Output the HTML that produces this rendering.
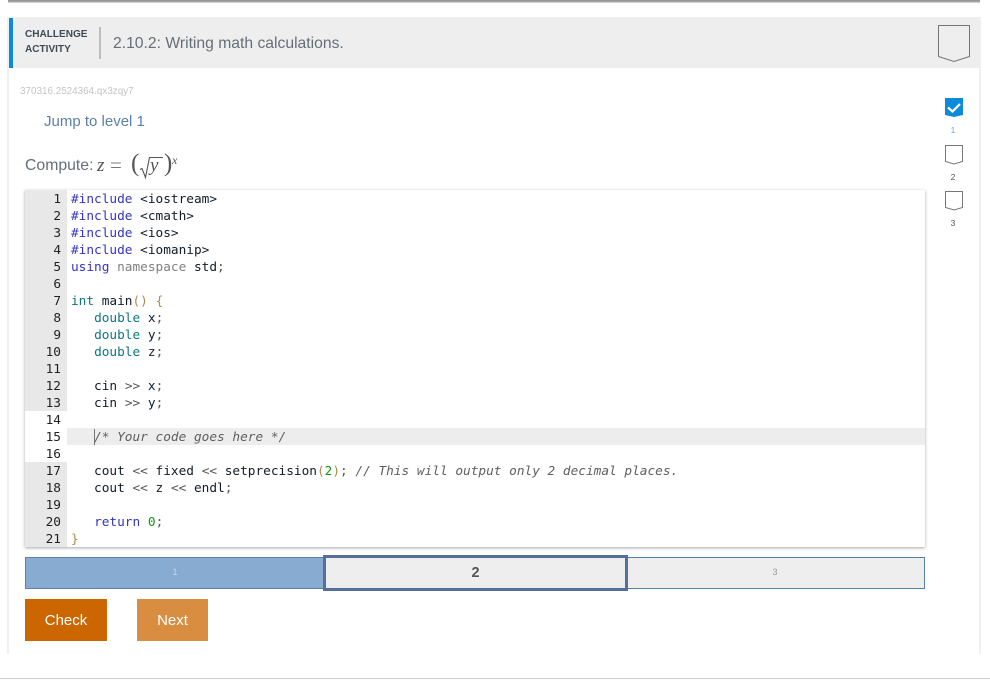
<!DOCTYPE html>
<html>
<head>
<meta charset="utf-8">
<style>
html,body{margin:0;padding:0;background:#fff;}
body{width:990px;height:685px;position:relative;overflow:hidden;font-family:"Liberation Sans",sans-serif;}
.a{position:absolute;}
.code{position:absolute;left:71px;top:191px;font-family:"DejaVu Sans Mono","Liberation Mono",monospace;font-size:12.78px;line-height:17px;white-space:pre;color:#111c28;}
.code div{height:17px;}
.nums{position:absolute;left:25px;width:36px;top:191px;text-align:right;font-family:"DejaVu Sans Mono","Liberation Mono",monospace;font-size:12.78px;line-height:17px;color:#222;}
.nums div{height:17px;}
.k{color:#3434c8}.g{color:#808080}.t{color:#0f7585}.o{color:#555}.b{color:#a98a50}.c{color:#5f5f5f;font-style:italic}.n{color:#119911}
.m{position:absolute;font-family:'Liberation Serif',serif;color:#555;}
</style>
</head>
<body>
<!-- top shadow -->
<div class="a" style="left:8px;top:0;width:972px;height:3px;background:linear-gradient(#8f8f8f,#a8a8a8 60%,#e8e8e8);"></div>
<!-- card side shadows -->
<div class="a" style="left:7px;top:17px;width:2px;height:637px;background:#f0f0f0;"></div>
<div class="a" style="left:979px;top:17px;width:2px;height:637px;background:#f0f0f0;"></div>
<!-- header -->
<div class="a" style="left:9px;top:17px;width:971px;height:51px;background:#eeeeee;"></div>
<div class="a" style="left:9px;top:18px;width:4px;height:50px;background:#0d8bd9;"></div>
<div class="a" style="left:25px;top:27px;font-size:10.05px;line-height:15px;font-weight:bold;color:#3f4a55;">CHALLENGE<br>ACTIVITY</div>
<div class="a" style="left:99px;top:27px;width:2px;height:32px;background:#bdbdbd;"></div>
<div class="a" style="left:113px;top:34px;font-size:15.7px;line-height:19px;color:#666e78;white-space:nowrap;">2.10.2: Writing math calculations.</div>
<!-- big badge -->
<svg class="a" style="left:930px;top:15px;" width="60" height="60"><path d="M8.5 10.5H39.5V41.5L24 46.5L8.5 41.5Z" fill="#eee" stroke="#757575" stroke-width="1"/></svg>

<div class="a" style="left:20px;top:86px;font-size:9.9px;line-height:12px;color:#c4c4c4;white-space:nowrap;">370316.2524364.qx3zqy7</div>
<div class="a" style="left:44px;top:113px;font-size:15px;line-height:18px;color:#5b7fa8;white-space:nowrap;">Jump to level 1</div>

<!-- compute -->
<div class="a" style="left:25px;top:156px;font-size:15.8px;line-height:20px;color:#666e78;white-space:nowrap;">Compute:</div>
<div class="m" style="left:97px;top:156px;font-style:italic;font-size:19px;line-height:20px;">z</div>
<div class="m" style="left:110px;top:155px;font-size:21px;line-height:20px;color:#777;">=</div>
<div class="m" style="left:131px;top:151px;font-size:25px;line-height:26px;">(</div>
<svg class="a" style="left:138px;top:152px;" width="32" height="28"><path d="M2 17.5L4 16.5L7.5 25.5L11.5 5.5H25" fill="none" stroke="#555" stroke-width="1.1"/></svg>
<div class="m" style="left:150px;top:156px;font-style:italic;font-size:19px;line-height:20px;">y</div>
<div class="m" style="left:164px;top:151px;font-size:25px;line-height:26px;">)</div>
<div class="m" style="left:172px;top:153px;font-style:italic;font-size:12px;line-height:14px;">x</div>

<!-- right level badges -->
<svg class="a" style="left:945px;top:98px;" width="18" height="20"><path d="M0 0H18V17L9 19L0 17Z" fill="#0d8bd9"/><path d="M3 9.5L7.5 13.5L15 6" fill="none" stroke="#fff" stroke-width="2.2"/></svg>
<div class="a" style="left:944px;top:125px;width:18px;text-align:center;font-size:8.5px;line-height:11px;color:#7d9ec4;">1</div>
<svg class="a" style="left:945px;top:144px;" width="18" height="22"><path d="M.5 1.5H17.5V17.5L9 20L.5 17.5Z" fill="#fff" stroke="#777" stroke-width="1"/></svg>
<div class="a" style="left:944px;top:172px;width:18px;text-align:center;font-size:8.5px;line-height:11px;color:#555;">2</div>
<svg class="a" style="left:945px;top:190px;" width="18" height="22"><path d="M.5 1.5H17.5V17.5L9 20L.5 17.5Z" fill="#fff" stroke="#777" stroke-width="1"/></svg>
<div class="a" style="left:944px;top:218px;width:18px;text-align:center;font-size:8.5px;line-height:11px;color:#555;">3</div>

<!-- editor -->
<div class="a" style="left:25px;top:190px;width:900px;height:357px;background:#fff;box-shadow:0 1px 3px rgba(0,0,0,.35);"></div>
<div class="a" style="left:25px;top:190px;width:42px;height:221px;background:#e8e8e8;"></div>
<div class="a" style="left:25px;top:462px;width:42px;height:85px;background:#e8e8e8;"></div>
<div class="a" style="left:67px;top:428px;width:858px;height:17px;background:#ededed;"></div>
<div class="a" style="left:94px;top:429px;width:1px;height:16px;background:#777;"></div>
<div class="nums"><div>1</div><div>2</div><div>3</div><div>4</div><div>5</div><div>6</div><div>7</div><div>8</div><div>9</div><div>10</div><div>11</div><div>12</div><div>13</div><div>14</div><div>15</div><div>16</div><div>17</div><div>18</div><div>19</div><div>20</div><div>21</div></div>
<div class="code"><div><span class="k">#include</span> &lt;iostream&gt;</div><div><span class="k">#include</span> &lt;cmath&gt;</div><div><span class="k">#include</span> &lt;ios&gt;</div><div><span class="k">#include</span> &lt;iomanip&gt;</div><div><span class="k">using</span> <span class="g">namespace</span> std<span class="o">;</span></div><div> </div><div><span class="t">int</span> main<span class="b">()</span> <span class="b">{</span></div><div>   <span class="t">double</span> x<span class="o">;</span></div><div>   <span class="t">double</span> y<span class="o">;</span></div><div>   <span class="t">double</span> z<span class="o">;</span></div><div> </div><div>   cin <span class="o">&gt;&gt;</span> x<span class="o">;</span></div><div>   cin <span class="o">&gt;&gt;</span> y<span class="o">;</span></div><div> </div><div>   <span class="c">/* Your code goes here */</span></div><div> </div><div>   cout <span class="o">&lt;&lt;</span> fixed <span class="o">&lt;&lt;</span> setprecision<span class="b">(</span><span class="n">2</span><span class="b">)</span><span class="o">;</span> <span class="c">// This will output only 2 decimal places.</span></div><div>   cout <span class="o">&lt;&lt;</span> z <span class="o">&lt;&lt;</span> endl<span class="o">;</span></div><div> </div><div>   <span class="k">return</span> <span class="n">0</span><span class="o">;</span></div><div><span class="b">}</span></div></div>

<!-- progress -->
<div class="a" style="left:25px;top:557px;width:298px;height:30px;background:#87abd1;border:1px solid #5b82a8;text-align:center;font-size:9px;line-height:28px;color:#c4d8ee;">1</div>
<div class="a" style="left:626px;top:557px;width:298px;height:30px;background:#eeeeee;border:1px solid #5480aa;border-left:0;text-align:center;font-size:9px;line-height:29px;color:#999;">3</div>
<div class="a" style="left:323px;top:555px;width:299px;height:30px;background:#eeeeee;border:3px solid #54709a;text-align:center;font-size:14.5px;font-weight:bold;line-height:30px;color:#555;">2</div>

<!-- buttons -->
<div class="a" style="left:25px;top:599px;width:82px;height:42px;background:#cc6600;color:#fff;text-align:center;font-size:15px;line-height:43px;">Check</div>
<div class="a" style="left:137px;top:599px;width:71px;height:42px;background:#d98d40;color:#fff;text-align:center;font-size:15px;line-height:43px;">Next</div>

<!-- bottom line -->
<div class="a" style="left:0;top:678px;width:990px;height:1px;background:#ccc;"></div>
</body>
</html>
